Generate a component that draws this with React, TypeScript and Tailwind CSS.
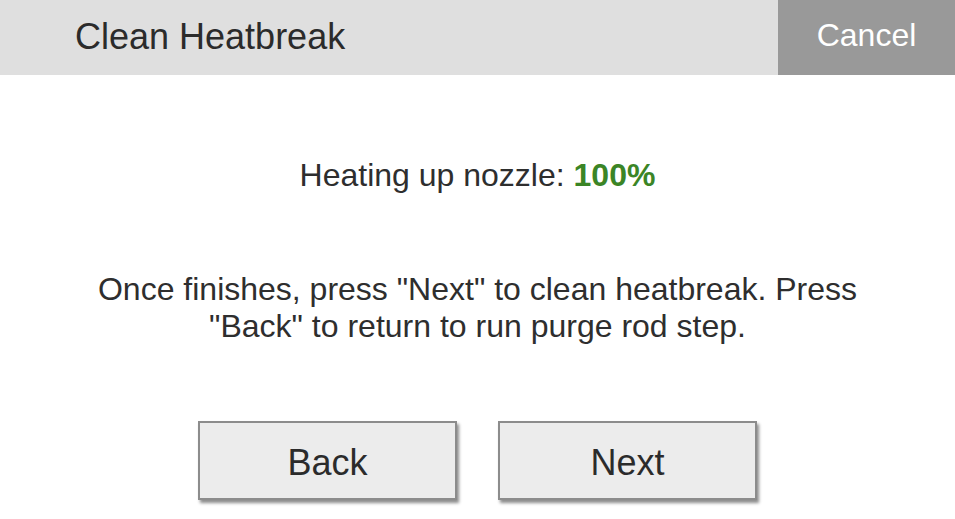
import React from "react";

export default function App() {
  return (
    <div
      className="w-[955px] h-[519px] bg-white flex flex-col overflow-hidden"
      style={{ fontFamily: '"Liberation Sans", Arial, sans-serif' }}
    >
      {/* Cabeçalho */}
      <div className="flex h-[75px] bg-[#dfdfdf]">
        <div className="flex-1 flex items-center pl-[75px] pb-[2px] text-[36px] text-[#2b2b2b]">
          Clean Heatbreak
        </div>
        <button className="w-[177px] pb-[5px] bg-[#999999] text-white text-[32px] flex items-center justify-center">
          Cancel
        </button>
      </div>

      <p className="mt-[82px] text-center text-[32px] leading-[37px] text-[#2e2e2e]">
        Heating up nozzle: <span className="font-bold text-[#3b8526]">100%</span>
      </p>

      <p className="mt-[77px] text-center text-[32px] leading-[37px] text-[#2e2e2e]">
        Once finishes, press "Next" to clean heatbreak. Press
        <br />
        "Back" to return to run purge rod step.
      </p>

      <div className="mt-[76px] flex justify-center gap-[41px]">
        <button className="w-[259px] h-[79px] pt-[5px] bg-[#ececec] border-2 border-[#8c8c8c] shadow-[2px_3px_3px_rgba(0,0,0,0.45)] text-[36px] text-[#2b2b2b]">
          Back
        </button>
        <button className="w-[259px] h-[79px] pt-[5px] bg-[#ececec] border-2 border-[#8c8c8c] shadow-[2px_3px_3px_rgba(0,0,0,0.45)] text-[36px] text-[#2b2b2b]">
          Next
        </button>
      </div>
    </div>
  );
}
